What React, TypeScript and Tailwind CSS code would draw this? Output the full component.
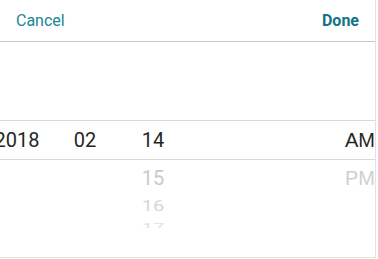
export default function App() {
  const cols = [
    { sel: "2018", next: [] as string[] },
    { sel: "02", next: [] as string[] },
    { sel: "14", next: ["15", "16", "17"] },
  ];

  return (
    <div className="w-[378px] h-[259px] bg-white overflow-hidden font-['Roboto',sans-serif]">
      <div className="w-[376px] h-[258px] border-r border-b border-[#e2e2e2] flex flex-col">
        {/* Header */}
        <div className="h-[42px] shrink-0 flex items-center justify-between pl-4 pr-4 border-b border-[#c9c9c9]">
          <button className="text-[16px] text-[#1c8596] leading-none">Cancel</button>
          <button className="text-[16px] font-bold text-[#0f7486] leading-none">Done</button>
        </div>

        {/* Wheel */}
        <div className="flex-1 flex flex-col overflow-hidden">
          <div className="h-[78px] shrink-0" />

          {/* Selected row */}
          <div className="h-[40px] shrink-0 border-y border-[#d9d9d9] flex items-center text-[20px] text-[#262626]">
            <div className="flex -ml-[17px]">
              {cols.map((c) => (
                <div key={c.sel} className="w-[68px] text-center">
                  {c.sel}
                </div>
              ))}
            </div>
            <div className="flex-1" />
            <div className="font-['Liberation_Sans',sans-serif] text-[20px] pr-0">AM</div>
          </div>

          {/* Following rows */}
          <div className="flex text-[20px]">
            <div className="flex -ml-[17px]">
              <div className="w-[68px]" />
              <div className="w-[68px]" />
              <div className="w-[68px] flex flex-col items-center">
                <div className="h-[36px] flex items-center text-[#c9c9c9]">15</div>
                <div className="h-[20px] flex items-center text-[#d6d6d6] scale-y-75">16</div>
                <div className="h-[12px] overflow-hidden text-[#e2e2e2]">
                  <div className="leading-[20px] pt-[12px] scale-y-50 origin-top">17</div>
                </div>
              </div>
            </div>
            <div className="flex-1" />
            <div className="h-[36px] flex items-center font-['Liberation_Sans',sans-serif] text-[#cfcfcf]">
              PM
            </div>
          </div>
        </div>
      </div>
    </div>
  );
}
